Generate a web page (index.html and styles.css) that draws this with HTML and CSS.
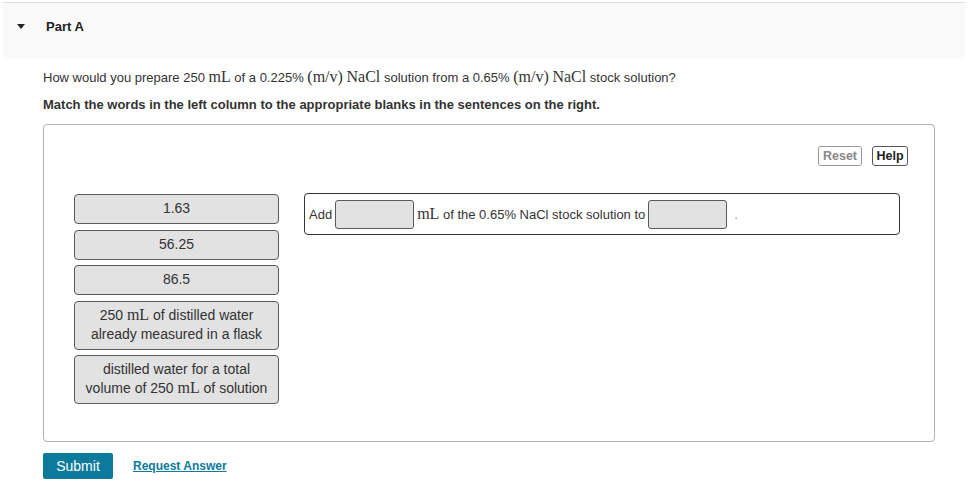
FILE: index.html
```html
<!DOCTYPE html>
<html>
<head>
<meta charset="utf-8">
<link rel="stylesheet" href="styles.css">
</head>
<body>
<div class="part-header">
  <span class="caret"></span>
  <span class="part-title">Part A</span>
</div>
<div class="content">
  <p class="question">How would you prepare 250 <span class="m">mL</span> of a 0.225% <span class="m">(m/v)</span> <span class="m">NaCl</span> solution from a 0.65% <span class="m">(m/v)</span> <span class="m">NaCl</span> stock solution?</p>
  <p class="instr">Match the words in the left column to the appropriate blanks in the sentences on the right.</p>
  <div class="box">
    <div class="toolbar">
      <button class="tbtn reset">Reset</button>
      <button class="tbtn help">Help</button>
    </div>
    <div class="work">
      <div class="choices">
        <div class="chip">1.63</div>
        <div class="chip">56.25</div>
        <div class="chip">86.5</div>
        <div class="chip two">250 <span class="m">mL</span> of distilled water<br>already measured in a flask</div>
        <div class="chip two">distilled water for a total<br>volume of 250 <span class="m">mL</span> of solution</div>
      </div>
      <div class="sentence">
        <span class="word">Add</span>
        <span class="blank"></span>
        <span class="word"><span class="m">mL</span> of the 0.65% NaCl stock solution to</span>
        <span class="blank"></span>
        <span class="dot">.</span>
      </div>
    </div>
  </div>
  <div class="actions">
    <button class="submit">Submit</button>
    <a class="req" href="#">Request Answer</a>
  </div>
</div>
</body>
</html>
```
FILE: styles.css
```css
html, body {
  margin: 0;
  padding: 0;
  background: #fff;
  font-family: "Liberation Sans", Arial, sans-serif;
  color: #333;
}
.part-header {
  margin: 2px 7px 0 3px;
  height: 56px;
  background: #f9f9f9;
  border-top: 1px solid #dedede;
  display: flex;
  align-items: flex-start;
}
.caret {
  width: 0;
  height: 0;
  margin: 21px 0 0 14px;
  border-left: 4px solid transparent;
  border-right: 4px solid transparent;
  border-top: 5px solid #222;
}
.part-title {
  margin: 16px 0 0 21px;
  font-size: 13px;
  line-height: 16px;
  font-weight: bold;
  color: #222;
}
.content {
  padding-left: 43px;
  width: 892px;
}
.m {
  font-family: "Liberation Serif", "Times New Roman", serif;
  font-size: 16px;
  line-height: 1;
}
.question {
  margin: 10px 0 0 0;
  font-size: 13px;
  line-height: 18px;
}
.instr {
  margin: 9px 0 0 0;
  font-size: 13px;
  font-weight: bold;
  line-height: 18px;
}
.box {
  margin-top: 10px;
  height: 316px;
  border: 1px solid #b0b0b0;
  border-radius: 4px;
}
.toolbar {
  display: flex;
  justify-content: flex-end;
  gap: 10px;
  padding: 21px 26px 0 0;
}
.tbtn {
  font-family: "Liberation Sans", Arial, sans-serif;
  font-size: 12.5px;
  font-weight: bold;
  background: #fff;
  border: 1px solid #777;
  border-radius: 3px;
  height: 20px;
  padding: 0 2px;
  line-height: 18px;
}
.reset {
  color: #888;
  border-color: #999;
  width: 44px;
}
.help {
  color: #222;
  border-color: #555;
  width: 36px;
}
.work {
  display: flex;
  align-items: flex-start;
  margin-top: 28px;
  padding-left: 30px;
}
.choices {
  display: flex;
  flex-direction: column;
  gap: 5.5px;
  width: 205px;
}
.chip {
  box-sizing: border-box;
  height: 30px;
  background: #e2e2e2;
  border: 1px solid #5a5a5a;
  border-radius: 4px;
  font-size: 14px;
  text-align: center;
  line-height: 26px;
  color: #333;
}
.chip.two {
  height: 49px;
  line-height: 19px;
  padding-top: 4px;
}
.chip .m {
  font-size: 16px;
}
.sentence {
  margin-left: 25px;
  margin-top: -1px;
  box-sizing: border-box;
  width: 596px;
  height: 42px;
  border: 1px solid #333;
  border-radius: 4px;
  display: flex;
  align-items: center;
  padding-left: 4px;
  font-size: 13px;
  color: #333;
}
.blank {
  box-sizing: border-box;
  width: 79px;
  height: 29px;
  background: #e2e2e2;
  border: 1px solid #5a5a5a;
  border-radius: 3px;
  margin: 0 3px;
}
.dot {
  margin-left: 4px;
  color: #888;
}
.actions {
  display: flex;
  align-items: center;
  margin-top: 11px;
  gap: 20px;
}
.submit {
  width: 70px;
  height: 26px;
  background: #0b7a9b;
  color: #fff;
  border: none;
  border-radius: 2px;
  font-family: "Liberation Sans", Arial, sans-serif;
  font-size: 14px;
  padding: 0;
}
.req {
  color: #0b7a9b;
  font-size: 12px;
  font-weight: bold;
  text-decoration: underline;
}
```
